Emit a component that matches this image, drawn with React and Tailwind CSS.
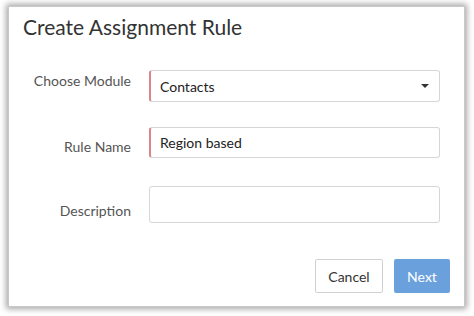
export default function App() {
  return (
    <div className="w-[474px] h-[316px] bg-white pt-[6px] pl-[8px]" style={{ fontFamily: 'Lato, "Open Sans", sans-serif' }}>
      <div className="w-[457px] h-[301px] bg-white border border-[#c8c8c8] shadow-[0_0_6px_2px_rgba(0,0,0,0.35)] flex flex-col">
        <div className="pl-[14px] pt-[6px] text-[21px] leading-[28px] text-[#333]">Create Assignment Rule</div>
        <div className="flex flex-col mt-[29px]">
          <div className="flex items-start">
            <div className="w-[122px] text-right text-[14px] text-[#555] leading-[18px] pt-[2px]">Choose Module</div>
            <div className="ml-[18px] w-[291px] h-[32px] border border-[#d6d6d6] border-l-[2px] border-l-[#d9868a] rounded-[3px] flex items-center pl-[9px] pr-[10px] text-[14px] text-[#222]">
              <span className="flex-1">Contacts</span>
              <svg width="8" height="4" viewBox="0 0 8 4"><path d="M0 0 L8 0 L4 4 Z" fill="#333" /></svg>
            </div>
          </div>
          <div className="flex items-start mt-[25px]">
            <div className="w-[122px] text-right text-[14px] text-[#555] leading-[18px] pt-[11px]">Rule Name</div>
            <div className="ml-[18px] w-[291px] h-[31px] border border-[#d6d6d6] border-l-[2px] border-l-[#d9868a] rounded-[3px] flex items-center pl-[9px] text-[14px] text-[#222]">
              Region based
            </div>
          </div>
          <div className="flex items-start mt-[28px]">
            <div className="w-[122px] text-right text-[14px] text-[#555] leading-[18px] pt-[16px]">Description</div>
            <div className="ml-[18px] w-[291px] h-[37px] border border-[#d6d6d6] rounded-[3px]"></div>
          </div>
        </div>
        <div className="flex justify-end mt-[36px] pr-[14px] gap-[11px]">
          <button className="w-[68px] h-[34px] border border-[#d0d0d0] rounded-[2px] bg-white text-[14px] text-[#333]">Cancel</button>
          <button className="w-[56px] h-[34px] rounded-[2px] bg-[#6aa1dd] text-[14px] text-white">Next</button>
        </div>
      </div>
    </div>
  );
}
